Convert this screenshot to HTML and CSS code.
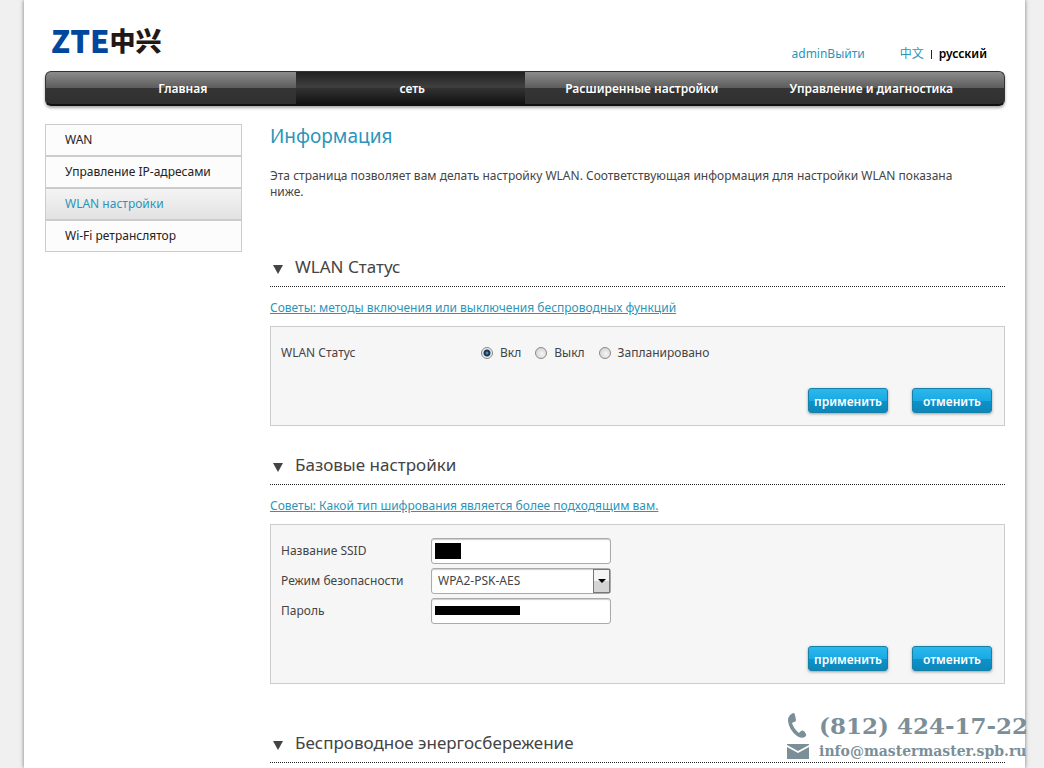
FILE: index.html
```html
<!DOCTYPE html>
<html lang="ru">
  <head>
    <meta charset="utf-8">
    <meta name="viewport" content="width=device-width, initial-scale=1">
    <title>WLAN настройки</title>
    <link rel="stylesheet" href="styles.css">
  </head>

  <body>
    <div class="page">

      <!-- Logo and language links -->
      <header class="header">
        <div class="logo"><span class="logo-latin">ZTE</span><span class="logo-cjk" lang="zh">中兴</span></div>
        <div class="user-links">
          <a class="logout" href="#">adminВыйти</a>
          <a href="#" lang="zh">中文</a>
          <span class="divider"></span>
          <a class="current" href="#">русский</a>
        </div>
      </header>

      <nav class="main-nav">
        <a href="#">Главная</a>
        <a class="active" href="#">сеть</a>
        <a href="#">Расширенные настройки</a>
        <a href="#">Управление и диагностика</a>
      </nav>

      <div class="columns">
        <nav class="side-nav">
          <a href="#">WAN</a>
          <a href="#">Управление IP-адресами</a>
          <a class="active" href="#">WLAN настройки</a>
          <a href="#">Wi-Fi ретранслятор</a>
        </nav>

        <main class="content">
          <h1>Информация</h1>
          <p class="intro">Эта страница позволяет вам делать настройку WLAN. Соответствующая информация для настройки WLAN показана ниже.</p>

          <!-- WLAN status -->
          <section>
            <h2><span class="arrow"></span>WLAN Статус</h2>
            <a class="tip" href="#">Советы: методы включения или выключения беспроводных функций</a>
            <form class="panel">
              <div class="row">
                <span class="row-name">WLAN Статус</span>
                <div class="radios">
                  <label><input type="radio" name="status" checked>Вкл</label>
                  <label><input type="radio" name="status">Выкл</label>
                  <label><input type="radio" name="status">Запланировано</label>
                </div>
              </div>
              <div class="buttons">
                <button type="button">применить</button>
                <button type="button">отменить</button>
              </div>
            </form>
          </section>

          <!-- Basic settings -->
          <section class="basic">
            <h2><span class="arrow"></span>Базовые настройки</h2>
            <a class="tip" href="#">Советы: Какой тип шифрования является более подходящим вам.</a>
            <form class="panel">
              <div class="row">
                <label class="row-name" for="ssid">Название SSID</label>
                <div class="field">
                  <input id="ssid" type="text">
                  <span class="mask mask-ssid"></span>
                </div>
              </div>
              <div class="row">
                <label class="row-name" for="security">Режим безопасности</label>
                <div class="field field-select">
                  <select id="security">
                    <option>WPA2-PSK-AES</option>
                  </select>
                </div>
              </div>
              <div class="row">
                <label class="row-name" for="password">Пароль</label>
                <div class="field">
                  <input id="password" type="text">
                  <span class="mask mask-password"></span>
                </div>
              </div>
              <div class="buttons">
                <button type="button">применить</button>
                <button type="button">отменить</button>
              </div>
            </form>
          </section>

          <section>
            <h2><span class="arrow"></span>Беспроводное энергосбережение</h2>
          </section>
        </main>
      </div>
    </div>

    <!-- Contacts over the page corner -->
    <div class="contacts">
      <svg class="phone" width="20" height="26" viewBox="0 0 20 26">
        <path d="M2 2 L5 0 Q7 0 7 2 L8 7 Q8 9 6 9 L4 10 Q6 16 11 20 L13 18 Q14 17 16 18 L18 21 Q19 22 17 24 Q13 26 9 23 Q1 17 0 8 Q0 4 2 2 Z"/>
      </svg>
      <a class="tel" href="tel:+78124241722">(812) 424-17-22</a>
      <svg width="22" height="15" viewBox="0 0 22 15">
        <path d="M0 0 H22 V1 L11 7 L0 1 Z"/>
        <path d="M0 3 L11 9 L22 3 V15 H0 Z"/>
      </svg>
      <a class="mail" href="mailto:info@mastermaster.spb.ru">info@mastermaster.spb.ru</a>
    </div>
  </body>
</html>
```
FILE: styles.css
```css
* {
    box-sizing: border-box;
}

body {
    margin: 0;
    padding: 0 19px 0 24px;
    background-color: #f0f0f0;
    font-family: "Noto Sans", "Noto Sans CJK SC", sans-serif;
    font-size: 12px;
    line-height: 16px;
    color: #444;
}

a {
    color: #2b95b9;
    text-decoration: none;
}

.page {
    min-height: 100vh;
    padding: 0 20px 0 21px;
    background-color: #fff;
    box-shadow: 0 0 4px #777;
}

/* Header */
.header {
    display: flex;
    justify-content: space-between;
    align-items: flex-end;
    height: 71px;
    padding: 0 18px 9px 6px;
}

.logo {
    display: flex;
    align-items: center;
    height: 44px;
    font-family: "Noto Sans CJK SC", sans-serif;
    font-weight: 900;
}

.logo-latin {
    font-size: 31px;
    color: #00479d;
}

.logo-cjk {
    font-size: 26px;
    color: #231815;
}

.user-links {
    display: flex;
    align-items: center;
}

.logout {
    margin-right: 35px;
}

.divider {
    width: 1px;
    height: 9px;
    margin: 0 7px;
    background-color: #222;
}

.user-links .current {
    color: #000;
    font-weight: 600;
}

/* Top menu */
.main-nav {
    display: flex;
    height: 35px;
    padding: 0 20px;
    border: 1px solid #333;
    border-bottom: 2px solid #111;
    border-radius: 6px;
    background: linear-gradient(#8c8c8c, #5c5c5c 50%, #353535 50%, #303030);
    box-shadow: 0 2px 3px #aaa;
}

.main-nav a {
    flex: 1;
    padding-left: 4px;
    line-height: 33px;
    text-align: center;
    font-weight: 600;
    color: #fff;
}

.main-nav .active {
    background: linear-gradient(#222, #404040 48%, #333 50%, #121212);
}

.columns {
    display: flex;
    align-items: flex-start;
    gap: 28px;
    padding-top: 18px;
}

/* Left menu */
.side-nav {
    flex: 0 0 197px;
    border: 1px solid #ccc;
}

.side-nav a {
    display: block;
    height: 32px;
    padding-left: 19px;
    border-bottom: 2px solid #ccc;
    background-color: #fcfcfc;
    line-height: 30px;
    color: #222;
}

.side-nav a:last-child {
    height: 30px;
    border-bottom: none;
}

.side-nav .active {
    background: linear-gradient(#f4f4f4, #e2e2e2);
    color: #2b95b9;
}

/* Content */
.content {
    flex: 1;
}

h1 {
    margin: 0;
    font-size: 19px;
    font-weight: normal;
    line-height: 24px;
    color: #2b95b9;
}

.intro {
    height: 83px;
    margin: 20px 0 0;
    padding-right: 32px;
}

h2 {
    display: flex;
    align-items: center;
    height: 36px;
    margin: 0;
    padding: 0 0 3px 3px;
    border-bottom: 1px dotted #222;
    font-size: 17px;
    font-weight: normal;
}

.arrow {
    margin: 4px 12px 0 0;
    border-top: 9px solid #444;
    border-left: 5px solid transparent;
    border-right: 5px solid transparent;
}

.tip {
    display: block;
    padding: 13px 0 10px;
    text-decoration: underline;
}

.panel {
    margin-bottom: 23px;
    padding: 11px 12px 12px 10px;
    border: 1px solid #ccc;
    background-color: #f6f6f7;
}

.basic .panel {
    margin-bottom: 43px;
}

.row {
    display: flex;
    align-items: center;
    height: 30px;
}

.row-name {
    width: 150px;
}

.radios {
    display: flex;
    gap: 14px;
    padding-left: 50px;
}

.radios label {
    display: flex;
    align-items: center;
    gap: 7px;
}

.radios input {
    appearance: none;
    width: 12px;
    height: 12px;
    margin: 0;
    border: 1px solid #888;
    border-radius: 50%;
    background: radial-gradient(circle at 60% 60%, #f4f4f4, #ccc);
}

.radios input:checked {
    background: radial-gradient(circle, #6fb6d8 0, #16395a 2px, #16395a 3px, #eee 4px);
}

.field {
    position: relative;
    width: 180px;
    height: 26px;
}

.field input,
.field select {
    appearance: none;
    width: 100%;
    height: 26px;
    padding: 0 6px;
    border: 1px solid #aaa;
    border-radius: 3px;
    background-color: #fff;
    box-shadow: inset 0 1px 1px #ccc;
    font: inherit;
    color: #444;
}

/* Drop-down button */
.field-select::before {
    content: "";
    position: absolute;
    top: 1px;
    right: 1px;
    width: 15px;
    height: 22px;
    border: 1px solid #777;
    background: linear-gradient(#f4f4f4 50%, #d4d4d4 50%);
    pointer-events: none;
}

.field-select::after {
    content: "";
    position: absolute;
    top: 11px;
    right: 5px;
    border-top: 4px solid #000;
    border-left: 4px solid transparent;
    border-right: 4px solid transparent;
    pointer-events: none;
}

.mask {
    position: absolute;
    left: 4px;
    background-color: #000;
}

.mask-ssid {
    top: 5px;
    width: 26px;
    height: 16px;
}

.mask-password {
    top: 8px;
    width: 85px;
    height: 9px;
}

.buttons {
    display: flex;
    justify-content: flex-end;
    gap: 24px;
    padding-top: 20px;
}

.buttons button {
    width: 80px;
    height: 25px;
    padding: 2px 0 0;
    border: 1px solid #1580a8;
    border-radius: 3px;
    background: linear-gradient(#2bb8ee, #1aa9e2 50%, #0b93cc 50%, #0d87b8);
    box-shadow: 0 1px 3px #999;
    font: inherit;
    font-weight: 600;
    color: #fff;
}

/* Contacts */
.contacts {
    position: absolute;
    right: 16px;
    top: 711px;
    display: grid;
    grid-template-columns: 22px auto;
    column-gap: 10px;
    align-items: center;
    font-family: "DejaVu Serif", serif;
    font-weight: bold;
}

.contacts svg {
    fill: #7b8f99;
}

.contacts .phone {
    margin-left: 1px;
}

.contacts a {
    color: #7b8f99;
}

.contacts .tel {
    font-size: 23px;
    line-height: 29px;
}

.contacts .mail {
    font-size: 14px;
    line-height: 22px;
}
```
